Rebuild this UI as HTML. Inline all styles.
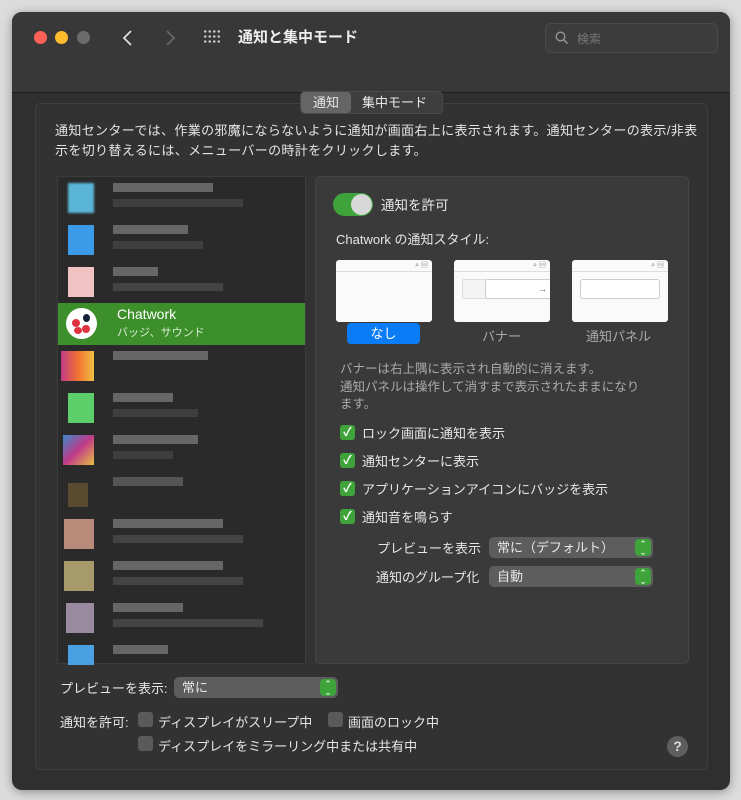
<!DOCTYPE html>
<html><head><meta charset="utf-8"><style>
*{box-sizing:border-box;margin:0;padding:0}
body{width:741px;height:800px;background:#dcdcdc;font-family:"Liberation Sans","Noto Sans CJK JP",sans-serif;color:#e6e6e6;position:relative;overflow:hidden;font-size:13px}
.abs{position:absolute}
.win{left:12px;top:12px;width:718px;height:778px;background:#2f2f2f;border-radius:10px;overflow:hidden;box-shadow:0 2px 10px rgba(0,0,0,.35)}
.tb{left:0;top:0;width:718px;height:81px;background:#383838;border-bottom:1px solid #1e1e1e}
.dot{width:13px;height:13px;border-radius:50%;top:19px}
.grp{left:23px;top:91px;width:673px;height:667px;border:1px solid #3f3f3f;background:#323232;border-radius:5px}
.list{left:45px;top:164px;width:249px;height:488px;background:#2a2a2a;border:1px solid #3c3c3c}
.row{left:0;width:247px;height:42px}
.pan{left:303px;top:164px;width:374px;height:488px;background:#3a3a3a;border:1px solid #444;border-radius:5px}
.cb{width:15px;height:15px;border-radius:3px;background:#3ea33a;color:#fff;font-size:12px;line-height:15px;text-align:center;font-weight:bold}
.ecb{width:15px;height:15px;border-radius:3px;background:#5a5a5a}
.sel{height:21px;background:#5d5d5d;border-radius:5px;font-size:13px;line-height:21px;padding-left:8px;color:#e8e8e8}
.arr{position:absolute;right:2px;top:2px;width:16px;height:17px;background:#3ea33a;border-radius:4px;color:#fff;font-size:9px;line-height:8px;text-align:center;padding-top:1px}
.thumb{width:96px;height:62px;background:#fafafa;border-radius:3px;top:83px}
.thumb .bar{position:absolute;left:0;top:0;width:100%;height:12px;border-bottom:1px solid #ddd;font-size:7px;color:#777;text-align:right;padding-right:4px;line-height:11px}
</style></head><body>
<div class="abs win">
 <div class="abs tb">
  <div class="abs dot" style="left:22px;background:#fe5f57"></div>
  <div class="abs dot" style="left:43px;background:#febc2e"></div>
  <div class="abs dot" style="left:65px;background:#6b6b6b"></div>
  <svg class="abs" style="left:108px;top:16px" width="16" height="20"><path d="M11 3L4 10L11 17" stroke="#ddd" stroke-width="1.8" fill="none"/></svg>
  <svg class="abs" style="left:150px;top:16px" width="16" height="20"><path d="M5 3L12 10L5 17" stroke="#666" stroke-width="1.8" fill="none"/></svg>
  <div class="abs" style="left:191px;top:17px;width:18px;height:16px;background:radial-gradient(circle,#ccc 1.1px,transparent 1.4px) 0 0/4.5px 5px"></div>
  <div class="abs" style="left:226px;top:14px;font-size:15px;font-weight:bold;color:#eee">通知と集中モード</div>
  <div class="abs" style="left:533px;top:11px;width:173px;height:30px;border:1px solid #4a4a4a;border-radius:6px;background:#3c3c3c">
   <svg class="abs" style="left:9px;top:7px" width="14" height="14"><circle cx="5.5" cy="5.5" r="4.3" stroke="#999" stroke-width="1.3" fill="none"/><path d="M8.7 8.7L12.5 12.5" stroke="#999" stroke-width="1.4"/></svg>
   <div class="abs" style="left:31px;top:6px;font-size:12px;color:#777">検索</div>
  </div>
 </div>
 <div class="abs grp"></div>
 <div class="abs" style="left:288px;top:79px;width:143px;height:23px;background:#3e3e3e;border:1px solid #4a4a4a;border-radius:5px"></div>
 <div class="abs" style="left:289px;top:80px;width:50px;height:21px;background:#656565;border-radius:4px;text-align:center;line-height:21px;font-size:13px">通知</div>
 <div class="abs" style="left:350px;top:80px;line-height:21px;font-size:13px">集中モード</div>
 <div class="abs" style="left:43px;top:109px;width:660px;white-space:nowrap;font-size:13px;letter-spacing:0.35px;line-height:20px;color:#e4e4e4">通知センターでは、作業の邪魔にならないように通知が画面右上に表示されます。通知センターの表示/非表<br>示を切り替えるには、メニューバーの時計をクリックします。</div>
 <div class="abs list">
  <div class="abs row" style="top:0"><div class="abs" style="left:10px;top:6px;width:26px;height:30px;background:#5ab5d6;filter:blur(1px)"></div><div class="abs" style="left:55px;top:6px;width:100px;height:9px;background:#666"></div><div class="abs" style="left:55px;top:22px;width:130px;height:8px;background:#3e3e3e"></div></div>
  <div class="abs row" style="top:42px"><div class="abs" style="left:10px;top:6px;width:26px;height:30px;background:#3b9be8"></div><div class="abs" style="left:55px;top:6px;width:75px;height:9px;background:#666"></div><div class="abs" style="left:55px;top:22px;width:90px;height:8px;background:#3e3e3e"></div></div>
  <div class="abs row" style="top:84px"><div class="abs" style="left:10px;top:6px;width:26px;height:30px;background:#f1c2c2"></div><div class="abs" style="left:55px;top:6px;width:45px;height:9px;background:#666"></div><div class="abs" style="left:55px;top:22px;width:110px;height:8px;background:#444"></div></div>
  <div class="abs row" style="top:126px;background:#3d8f2c">
   <div class="abs" style="left:8px;top:5px;width:31px;height:31px;border-radius:50%;background:#fff"></div>
   <div class="abs" style="left:14px;top:16px;width:8px;height:8px;border-radius:50%;background:#e03340"></div>
   <div class="abs" style="left:24px;top:22px;width:8px;height:8px;border-radius:50%;background:#e03340"></div>
   <div class="abs" style="left:25px;top:11px;width:7px;height:8px;border-radius:50%;background:#16223a"></div>
   <div class="abs" style="left:16px;top:24px;width:8px;height:7px;border-radius:50%;background:#e03340"></div>
   <div class="abs" style="left:59px;top:3px;font-size:14px;color:#fff">Chatwork</div>
   <div class="abs" style="left:59px;top:21px;font-size:11px;color:#d8ecd4">バッジ、サウンド</div>
  </div>
  <div class="abs row" style="top:168px"><div class="abs" style="left:3px;top:6px;width:33px;height:30px;background:linear-gradient(90deg,#c13a8a,#f07030,#f0c040)"></div><div class="abs" style="left:55px;top:6px;width:95px;height:9px;background:#666"></div></div>
  <div class="abs row" style="top:210px"><div class="abs" style="left:10px;top:6px;width:26px;height:30px;background:#5dcf6a"></div><div class="abs" style="left:55px;top:6px;width:60px;height:9px;background:#666"></div><div class="abs" style="left:55px;top:22px;width:85px;height:8px;background:#3e3e3e"></div></div>
  <div class="abs row" style="top:252px"><div class="abs" style="left:5px;top:6px;width:31px;height:30px;background:linear-gradient(135deg,#3b88c8,#c13a8a,#e8c040)"></div><div class="abs" style="left:55px;top:6px;width:85px;height:9px;background:#666"></div><div class="abs" style="left:55px;top:22px;width:60px;height:8px;background:#3e3e3e"></div></div>
  <div class="abs row" style="top:294px"><div class="abs" style="left:10px;top:12px;width:20px;height:24px;background:#5a4a30"></div><div class="abs" style="left:55px;top:6px;width:70px;height:9px;background:#555"></div></div>
  <div class="abs row" style="top:336px"><div class="abs" style="left:6px;top:6px;width:30px;height:30px;background:#b78a7a"></div><div class="abs" style="left:55px;top:6px;width:110px;height:9px;background:#666"></div><div class="abs" style="left:55px;top:22px;width:130px;height:8px;background:#444"></div></div>
  <div class="abs row" style="top:378px"><div class="abs" style="left:6px;top:6px;width:30px;height:30px;background:#a79a6a"></div><div class="abs" style="left:55px;top:6px;width:110px;height:9px;background:#666"></div><div class="abs" style="left:55px;top:22px;width:130px;height:8px;background:#444"></div></div>
  <div class="abs row" style="top:420px"><div class="abs" style="left:8px;top:6px;width:28px;height:30px;background:#9a8aa0"></div><div class="abs" style="left:55px;top:6px;width:70px;height:9px;background:#666"></div><div class="abs" style="left:55px;top:22px;width:150px;height:8px;background:#444"></div></div>
  <div class="abs row" style="top:462px"><div class="abs" style="left:10px;top:6px;width:26px;height:20px;background:#4aa0e0"></div><div class="abs" style="left:55px;top:6px;width:55px;height:9px;background:#666"></div></div>
 </div>
 <div class="abs pan">
  <div class="abs" style="left:17px;top:16px;width:40px;height:23px;border-radius:12px;background:#3ea33a"></div>
  <div class="abs" style="left:35px;top:17px;width:21px;height:21px;border-radius:50%;background:#d8d8d8"></div>
  <div class="abs" style="left:65px;top:17px;font-size:13.5px">通知を許可</div>
  <div class="abs" style="left:20px;top:52px;font-size:13px">Chatwork の通知スタイル:</div>
  <div class="abs thumb" style="left:20px"><div class="bar">⌕ ▤</div></div>
  <div class="abs thumb" style="left:138px;overflow:hidden"><div class="bar">⌕ ▤</div><div class="abs" style="left:8px;top:19px;width:90px;height:20px;background:#f4f4f4;border:1px solid #ddd;border-radius:2px"></div><div class="abs" style="left:31px;top:19px;width:70px;height:20px;background:#fff;border:1px solid #ccc;border-radius:3px;font-size:9px;color:#555;text-align:right;line-height:18px;padding-right:7px">→</div></div>
  <div class="abs thumb" style="left:256px"><div class="bar">⌕ ▤</div><div class="abs" style="left:8px;top:19px;width:80px;height:20px;background:#fff;border:1px solid #ccc;border-radius:3px"></div></div>
  <div class="abs" style="left:31px;top:146px;width:73px;height:21px;background:#0a7cf5;border-radius:4px;text-align:center;line-height:21px;color:#fff;font-size:13px">なし</div>
  <div class="abs" style="left:166px;top:149px;font-size:13px;color:#aaa">バナー</div>
  <div class="abs" style="left:270px;top:149px;font-size:13px;color:#aaa">通知パネル</div>
  <div class="abs" style="left:24px;top:184px;width:310px;font-size:12.5px;line-height:17.5px;color:#aaa">バナーは右上隅に表示され自動的に消えます。<br>通知パネルは操作して消すまで表示されたままになります。</div>
  <div class="abs cb" style="left:24px;top:248px">✓</div><div class="abs" style="left:46px;top:246px;font-size:13px">ロック画面に通知を表示</div>
  <div class="abs cb" style="left:24px;top:276px">✓</div><div class="abs" style="left:46px;top:274px;font-size:13px">通知センターに表示</div>
  <div class="abs cb" style="left:24px;top:304px">✓</div><div class="abs" style="left:46px;top:302px;font-size:13px">アプリケーションアイコンにバッジを表示</div>
  <div class="abs cb" style="left:24px;top:332px">✓</div><div class="abs" style="left:46px;top:330px;font-size:13px">通知音を鳴らす</div>
  <div class="abs" style="left:61px;top:361px;font-size:13px">プレビューを表示</div>
  <div class="abs sel" style="left:173px;top:360px;width:164px">常に（デフォルト）<div class="arr">⌃<br>⌄</div></div>
  <div class="abs" style="left:60px;top:390px;font-size:13px">通知のグループ化</div>
  <div class="abs sel" style="left:173px;top:389px;width:164px">自動<div class="arr">⌃<br>⌄</div></div>
 </div>
 <div class="abs" style="left:48px;top:666px;font-size:13px">プレビューを表示:</div>
 <div class="abs sel" style="left:162px;top:665px;width:164px">常に<div class="arr">⌃<br>⌄</div></div>
 <div class="abs" style="left:48px;top:700px;font-size:13px">通知を許可:</div>
 <div class="abs ecb" style="left:126px;top:700px"></div><div class="abs" style="left:146px;top:700px;font-size:13px">ディスプレイがスリープ中</div>
 <div class="abs ecb" style="left:316px;top:700px"></div><div class="abs" style="left:336px;top:700px;font-size:13px">画面のロック中</div>
 <div class="abs ecb" style="left:126px;top:724px"></div><div class="abs" style="left:146px;top:724px;font-size:13px">ディスプレイをミラーリング中または共有中</div>
 <div class="abs" style="left:655px;top:724px;width:21px;height:21px;border-radius:50%;background:#5e5e5e;text-align:center;line-height:21px;font-size:14px;font-weight:bold;color:#ddd">?</div>
</div>
</body></html>
